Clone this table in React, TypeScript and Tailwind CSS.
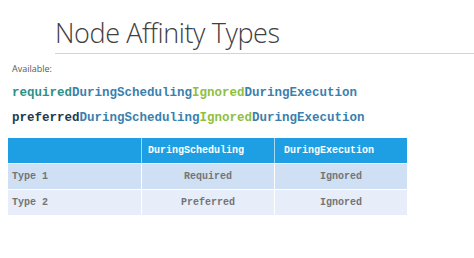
const mono = { fontFamily: '"Liberation Mono", "Courier New", monospace' };

function CodeLine({ prefix, prefixColor }: { prefix: string; prefixColor: string }) {
  return (
    <div className="text-[12.5px] font-bold leading-none whitespace-nowrap" style={mono}>
      <span className={prefixColor}>{prefix}</span>
      <span className="text-[#3b7fae]">DuringScheduling</span>
      <span className="text-[#8fbf3f]">Ignored</span>
      <span className="text-[#3b7fae]">DuringExecution</span>
    </div>
  );
}

const rows = [
  { name: "Type 1", sched: "Required", exec: "Ignored", bg: "bg-[#cfe0f4]" },
  { name: "Type 2", sched: "Preferred", exec: "Ignored", bg: "bg-[#e7eef9]" },
];

export default function App() {
  return (
    <div className="w-[474px] h-[258px] bg-white overflow-hidden" style={{ fontFamily: '"Open Sans", sans-serif' }}>
      {/* title */}
      <div className="pl-[55px] pt-[16px]">
        <h1 className="text-[27px] font-light leading-[34px] tracking-[-0.4px] text-[#404040]">Node Affinity Types</h1>
        <div className="mt-[3px] h-px bg-[#d4d4d4]" />
      </div>

      <div className="pl-[12px] pt-[10px] text-[9px] leading-none text-[#595959]">Available:</div>

      <div className="pl-[12px] pt-[14px] flex flex-col gap-[12.5px]">
        <CodeLine prefix="required" prefixColor="text-[#2f8f8a]" />
        <CodeLine prefix="preferred" prefixColor="text-[#1e3a4c]" />
      </div>

      {/* table */}
      <div className="ml-[8px] mt-[13px] w-[399px] text-[10px]" style={mono}>
        <div className="grid grid-cols-[133px_133px_133px] h-[25px] bg-[#1e9fe3] text-white font-bold">
          <div />
          <div className="border-l border-white/60 flex items-center pl-[6px]">DuringScheduling</div>
          <div className="border-l border-white/60 flex items-center pl-[9px]">DuringExecution</div>
        </div>
        {rows.map((r) => (
          <div key={r.name} className={`grid grid-cols-[133px_133px_133px] h-[26px] ${r.bg} text-[#747474] font-bold border-t border-white`}>
            <div className="flex items-center pl-[4px]">{r.name}</div>
            <div className="border-l border-white flex items-center justify-center">{r.sched}</div>
            <div className="border-l border-white flex items-center justify-center">{r.exec}</div>
          </div>
        ))}
      </div>
    </div>
  );
}
